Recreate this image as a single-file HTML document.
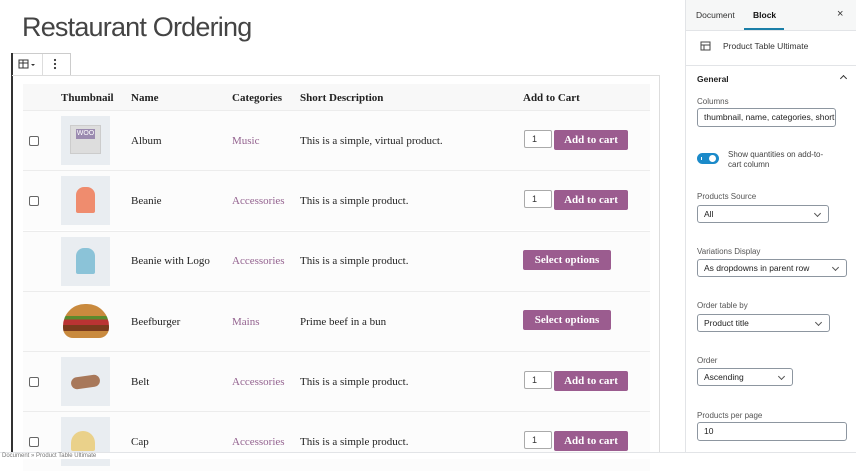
<!DOCTYPE html>
<html><head><meta charset="utf-8"><style>
*{box-sizing:border-box;margin:0;padding:0}
body{width:856px;height:459px;overflow:hidden;background:#fff;font-family:"Liberation Sans",sans-serif;position:relative}
.abs{position:absolute}
.title{left:22px;top:12px;font-size:27px;font-weight:normal;color:#444;letter-spacing:-0.8px}
.serif{font-family:"Liberation Serif","DejaVu Serif",serif}
.th{top:92px;font-size:11px;font-weight:bold;color:#222}
.row{left:23px;width:627px;height:60px;border-top:1px solid #ececec;background:#fcfcfc}
.cb{left:29px;width:10px;height:10px;border:1px solid #666;border-radius:2px;background:#fff}
.thumb{left:61px;width:49px;height:49px;background:#e9edf1}
.nm{left:131px;font-size:11px;color:#222}
.cat{left:232px;font-size:11px;color:#93628f}
.ds{left:300px;font-size:11px;color:#222}
.qty{left:524px;width:28px;height:18px;border:1px solid #aaa;border-radius:2px;font-size:9px;padding:3px 0 0 7px;background:#fff;color:#333}
.btn{background:#9b5c8f;color:#fff;font-size:11px;font-weight:bold;height:20px;line-height:20px;text-align:center;border-radius:2px}
.lbl{left:697px;font-size:8px;color:#555}
.inp{left:697px;height:18px;border:1px solid #8d96a0;border-radius:3px;font-size:8.5px;color:#222;padding:3px 0 0 6px;background:#fff;white-space:nowrap;overflow:hidden}
.sel:after{content:"";position:absolute;right:8px;top:5px;width:4px;height:4px;border-right:1px solid #555;border-bottom:1px solid #555;transform:rotate(45deg)}
</style></head><body>
<div class="abs title">Restaurant Ordering</div>
<div class="abs" style="left:12px;top:53px;width:59px;height:23px;border:1px solid #ccc;border-bottom:none;background:#fff"></div>
<div class="abs" style="left:42px;top:54px;width:1px;height:21px;background:#ddd"></div>
<svg class="abs" style="left:18px;top:59px" width="20" height="10"><rect x="1" y="1" width="9" height="8" fill="none" stroke="#333"/><line x1="1" y1="4" x2="10" y2="4" stroke="#333"/><line x1="5" y1="1" x2="5" y2="9" stroke="#333"/><path d="M13 5l2 2 2-2z" fill="#333"/></svg>
<svg class="abs" style="left:53px;top:58px" width="4" height="12"><circle cx="2" cy="2" r="1.1" fill="#333"/><circle cx="2" cy="6" r="1.1" fill="#333"/><circle cx="2" cy="10" r="1.1" fill="#333"/></svg>
<div class="abs" style="left:11px;top:53px;width:2px;height:399px;background:#333"></div>
<div class="abs" style="left:12px;top:75px;width:648px;height:380px;border:1px solid #ddd;border-left:none;border-bottom:none"></div>
<div class="abs" style="left:23px;top:84px;width:627px;height:27px;background:#f8f8f8"></div>
<div class="abs th serif" style="left:61px">Thumbnail</div>
<div class="abs th serif" style="left:131px">Name</div>
<div class="abs th serif" style="left:232px">Categories</div>
<div class="abs th serif" style="left:300px">Short Description</div>
<div class="abs th serif" style="left:523px">Add to Cart</div>

<div class="abs row" style="top:110px"></div>
<div class="abs row" style="top:170px"></div>
<div class="abs row" style="top:231px"></div>
<div class="abs row" style="top:291px"></div>
<div class="abs row" style="top:351px"></div>
<div class="abs row" style="top:411px"></div>

<div class="abs cb" style="top:136px"></div>
<div class="abs thumb" style="top:116px"><div style="margin:9px 0 0 9px;width:31px;height:29px;background:#ddd;border:1px solid #ccc"><div style="margin:3px 5px;height:10px;background:#9b8bb0;color:#fff;font-size:7px;text-align:center;line-height:10px">WOO</div></div></div>
<div class="abs nm serif" style="top:135px">Album</div>
<div class="abs cat serif" style="top:135px">Music</div>
<div class="abs ds serif" style="top:135px">This is a simple, virtual product.</div>
<div class="abs qty" style="top:130px">1</div>
<div class="abs btn serif" style="left:554px;top:130px;width:74px">Add to cart</div>
<div class="abs cb" style="top:196px"></div>
<div class="abs thumb" style="top:176px"><div style="margin:11px 0 0 15px;width:19px;height:26px;background:#ef8c6e;border-radius:8px 8px 2px 2px"></div></div>
<div class="abs nm serif" style="top:195px">Beanie</div>
<div class="abs cat serif" style="top:195px">Accessories</div>
<div class="abs ds serif" style="top:195px">This is a simple product.</div>
<div class="abs qty" style="top:190px">1</div>
<div class="abs btn serif" style="left:554px;top:190px;width:74px">Add to cart</div>
<div class="abs thumb" style="top:237px"><div style="margin:11px 0 0 15px;width:19px;height:26px;background:#8bc3d8;border-radius:8px 8px 2px 2px"></div></div>
<div class="abs nm serif" style="top:255px">Beanie with Logo</div>
<div class="abs cat serif" style="top:255px">Accessories</div>
<div class="abs ds serif" style="top:255px">This is a simple product.</div>
<div class="abs btn serif" style="left:523px;top:250px;width:88px">Select options</div>
<div class="abs" style="left:63px;top:304px;width:46px;height:34px;border-radius:22px 22px 10px 10px;background:linear-gradient(#c98a3e 0 35%,#5a8a2e 35% 45%,#b33 45% 62%,#7a3a1c 62% 80%,#c98a3e 80%)"></div>
<div class="abs nm serif" style="top:316px">Beefburger</div>
<div class="abs cat serif" style="top:316px">Mains</div>
<div class="abs ds serif" style="top:316px">Prime beef in a bun</div>
<div class="abs btn serif" style="left:523px;top:310px;width:88px">Select options</div>
<div class="abs cb" style="top:377px"></div>
<div class="abs thumb" style="top:357px"><div style="margin:19px 0 0 10px;width:29px;height:12px;background:#a8785a;border-radius:6px;transform:rotate(-8deg)"></div></div>
<div class="abs nm serif" style="top:376px">Belt</div>
<div class="abs cat serif" style="top:376px">Accessories</div>
<div class="abs ds serif" style="top:376px">This is a simple product.</div>
<div class="abs qty" style="top:371px">1</div>
<div class="abs btn serif" style="left:554px;top:371px;width:74px">Add to cart</div>
<div class="abs cb" style="top:437px"></div>
<div class="abs thumb" style="top:417px"><div style="margin:14px 0 0 10px;width:24px;height:20px;background:#ead18a;border-radius:12px 12px 2px 2px"></div></div>
<div class="abs nm serif" style="top:436px">Cap</div>
<div class="abs cat serif" style="top:436px">Accessories</div>
<div class="abs ds serif" style="top:436px">This is a simple product.</div>
<div class="abs qty" style="top:431px">1</div>
<div class="abs btn serif" style="left:554px;top:431px;width:74px">Add to cart</div>

<div class="abs" style="left:0;top:452px;width:856px;height:7px;background:#fff;border-top:1px solid #e2e4e7"></div>
<div class="abs" style="left:2px;top:453px;font-size:6px;color:#777">Document » Product Table Ultimate</div>

<div class="abs" style="left:685px;top:0;width:171px;height:452px;border-left:1px solid #e2e4e7;background:#fff"></div>
<div class="abs" style="left:686px;top:0;width:170px;height:31px;background:#f6f7f7;border-bottom:1px solid #e2e4e7"></div>
<div class="abs" style="left:696px;top:10px;font-size:8.5px;color:#333">Document</div>
<div class="abs" style="left:753px;top:10px;font-size:8.5px;color:#111;font-weight:bold">Block</div>
<div class="abs" style="left:744px;top:28px;width:40px;height:2px;background:#1a7fa8"></div>
<div class="abs" style="left:837px;top:8px;font-size:11px;color:#333">×</div>
<svg class="abs" style="left:700px;top:41px" width="11" height="10"><rect x="1" y="1" width="9" height="8" fill="none" stroke="#444"/><line x1="1" y1="4" x2="10" y2="4" stroke="#444"/><line x1="4" y1="4" x2="4" y2="9" stroke="#444"/></svg>
<div class="abs" style="left:723px;top:41px;font-size:8.5px;color:#333">Product Table Ultimate</div>
<div class="abs" style="left:686px;top:65px;width:170px;height:1px;background:#e2e4e7"></div>
<div class="abs" style="left:697px;top:74px;font-size:8.5px;font-weight:bold;color:#222">General</div>
<div class="abs" style="left:841px;top:76px;width:5px;height:5px;border-left:1.3px solid #333;border-top:1.3px solid #333;transform:rotate(45deg)"></div>
<div class="abs lbl" style="top:97px">Columns</div>
<div class="abs inp" style="top:108px;width:139px;height:19px">thumbnail, name, categories, short</div>
<div class="abs" style="left:697px;top:153px;width:22px;height:11px;border-radius:6px;background:#1b8ac9"></div>
<div class="abs" style="left:709px;top:155px;width:7px;height:7px;border-radius:50%;background:#fff"></div>
<div class="abs" style="left:701px;top:157px;width:1px;height:3px;background:#fff"></div>
<div class="abs lbl" style="left:728px;top:150px;line-height:10px;color:#444">Show quantities on add-to-<br>cart column</div>
<div class="abs lbl" style="top:192px">Products Source</div>
<div class="abs inp sel" style="top:205px;width:132px">All</div>
<div class="abs lbl" style="top:247px">Variations Display</div>
<div class="abs inp sel" style="top:259px;width:150px">As dropdowns in parent row</div>
<div class="abs lbl" style="top:301px">Order table by</div>
<div class="abs inp sel" style="top:314px;width:133px">Product title</div>
<div class="abs lbl" style="top:356px">Order</div>
<div class="abs inp sel" style="top:368px;width:96px">Ascending</div>
<div class="abs lbl" style="top:411px">Products per page</div>
<div class="abs inp" style="top:422px;width:150px;height:19px">10</div>
</body></html>
